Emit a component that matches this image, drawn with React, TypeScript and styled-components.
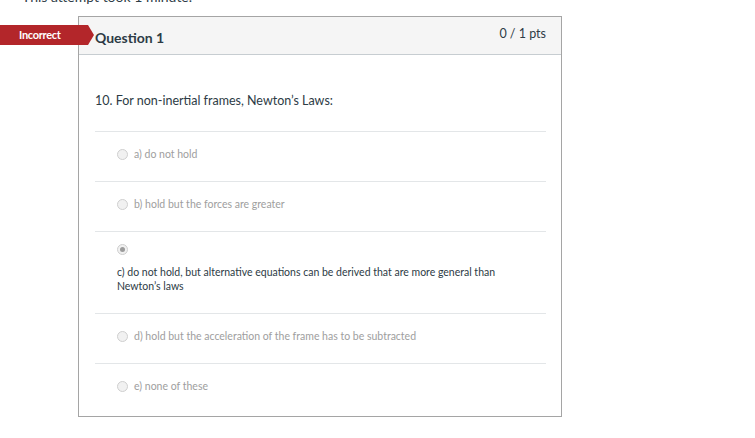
import React from "react";
import styled, { createGlobalStyle } from "styled-components";

const GlobalStyle = createGlobalStyle`
  body {
    margin: 0;
    background: #fff;
    font-family: Lato, "Open Sans", sans-serif;
    color: #2d3b45;
  }
`;

const Page = styled.div`
  width: 755px;
  height: 438px;
  overflow: hidden;
`;

const AttemptNote = styled.div`
  margin: -11px 0 0 22px;
  font-size: 14px;
  line-height: 16px;
  height: 16px;
  color: #2d3b45;
`;

const Card = styled.div`
  position: relative;
  margin: 11px 0 0 78px;
  width: 484px;
  height: 401px;
  border: 1px solid #a5a5a5;
  box-sizing: border-box;
`;

const Banner = styled.div`
  position: absolute;
  left: -79px;
  top: 8px;
  width: 88px;
  height: 20px;
  background: #b3262a;
  color: #fff;
  font-size: 11px;
  font-weight: 700;
  line-height: 20px;
  padding-left: 19px;
  box-sizing: border-box;
  letter-spacing: -0.3px;
  &::after {
    content: "";
    position: absolute;
    right: -6px;
    top: 0;
    border-top: 10px solid transparent;
    border-bottom: 10px solid transparent;
    border-left: 6px solid #b3262a;
  }
`;

const Header = styled.div`
  display: flex;
  justify-content: space-between;
  align-items: flex-start;
  height: 37px;
  background: #f5f5f5;
  border-bottom: 1px solid #c7cdd1;
  padding: 0 15px 0 16px;
`;

const Title = styled.div`
  padding-top: 12px;
  font-size: 14px;
  font-weight: 700;
`;

const Points = styled.div`
  padding-top: 9px;
  font-size: 12.5px;
`;

const Body = styled.div`
  padding: 0 15px 0 16px;
`;

const QuestionText = styled.div`
  padding: 38px 0 22px;
  font-size: 12.5px;
  line-height: 16px;
  border-bottom: 1px solid #e3e6e8;
`;

const Answer = styled.div<{ $tall?: boolean; $last?: boolean }>`
  padding: ${(p) => (p.$tall ? "10px 45px 20px 22px" : "15px 0 20px 22px")};
  border-bottom: ${(p) => (p.$last ? "none" : "1px solid #e3e6e8")};
  font-size: 10.5px;
  line-height: 14px;
  color: ${(p) => (p.$tall ? "#2d3b45" : "#9e9e9e")};
`;

const Line = styled.div`
  display: flex;
  align-items: center;
  gap: 6px;
  height: 14px;
`;

const Radio = styled.span<{ $checked?: boolean }>`
  position: relative;
  display: inline-block;
  width: 9px;
  height: 9px;
  border-radius: 50%;
  border: 1px solid #cfcfcf;
  background: #f1f1f1;
  &::after {
    content: "";
    display: ${(p) => (p.$checked ? "block" : "none")};
    position: absolute;
    left: 2px;
    top: 2px;
    width: 5px;
    height: 5px;
    border-radius: 50%;
    background: #9b9b9b;
  }
`;

const WrappedLabel = styled.div`
  margin-top: 9px;
`;

const answers = [
  "a) do not hold",
  "b) hold but the forces are greater",
  "c) do not hold, but alternative equations can be derived that are more general than Newton’s laws",
  "d) hold but the acceleration of the frame has to be subtracted",
  "e) none of these",
];

export default function App() {
  return (
    <Page>
      <GlobalStyle />
      <AttemptNote>This attempt took 1 minute.</AttemptNote>
      <Card>
        <Banner>Incorrect</Banner>
        <Header>
          <Title>Question 1</Title>
          <Points>0 / 1 pts</Points>
        </Header>
        <Body>
          <QuestionText>10. For non-inertial frames, Newton’s Laws:</QuestionText>
          {answers.map((a, i) =>
            i === 2 ? (
              <Answer key={a} $tall>
                <Line>
                  <Radio $checked />
                </Line>
                <WrappedLabel>{a}</WrappedLabel>
              </Answer>
            ) : (
              <Answer key={a} $last={i === answers.length - 1}>
                <Line>
                  <Radio />
                  {a}
                </Line>
              </Answer>
            )
          )}
        </Body>
      </Card>
    </Page>
  );
}
